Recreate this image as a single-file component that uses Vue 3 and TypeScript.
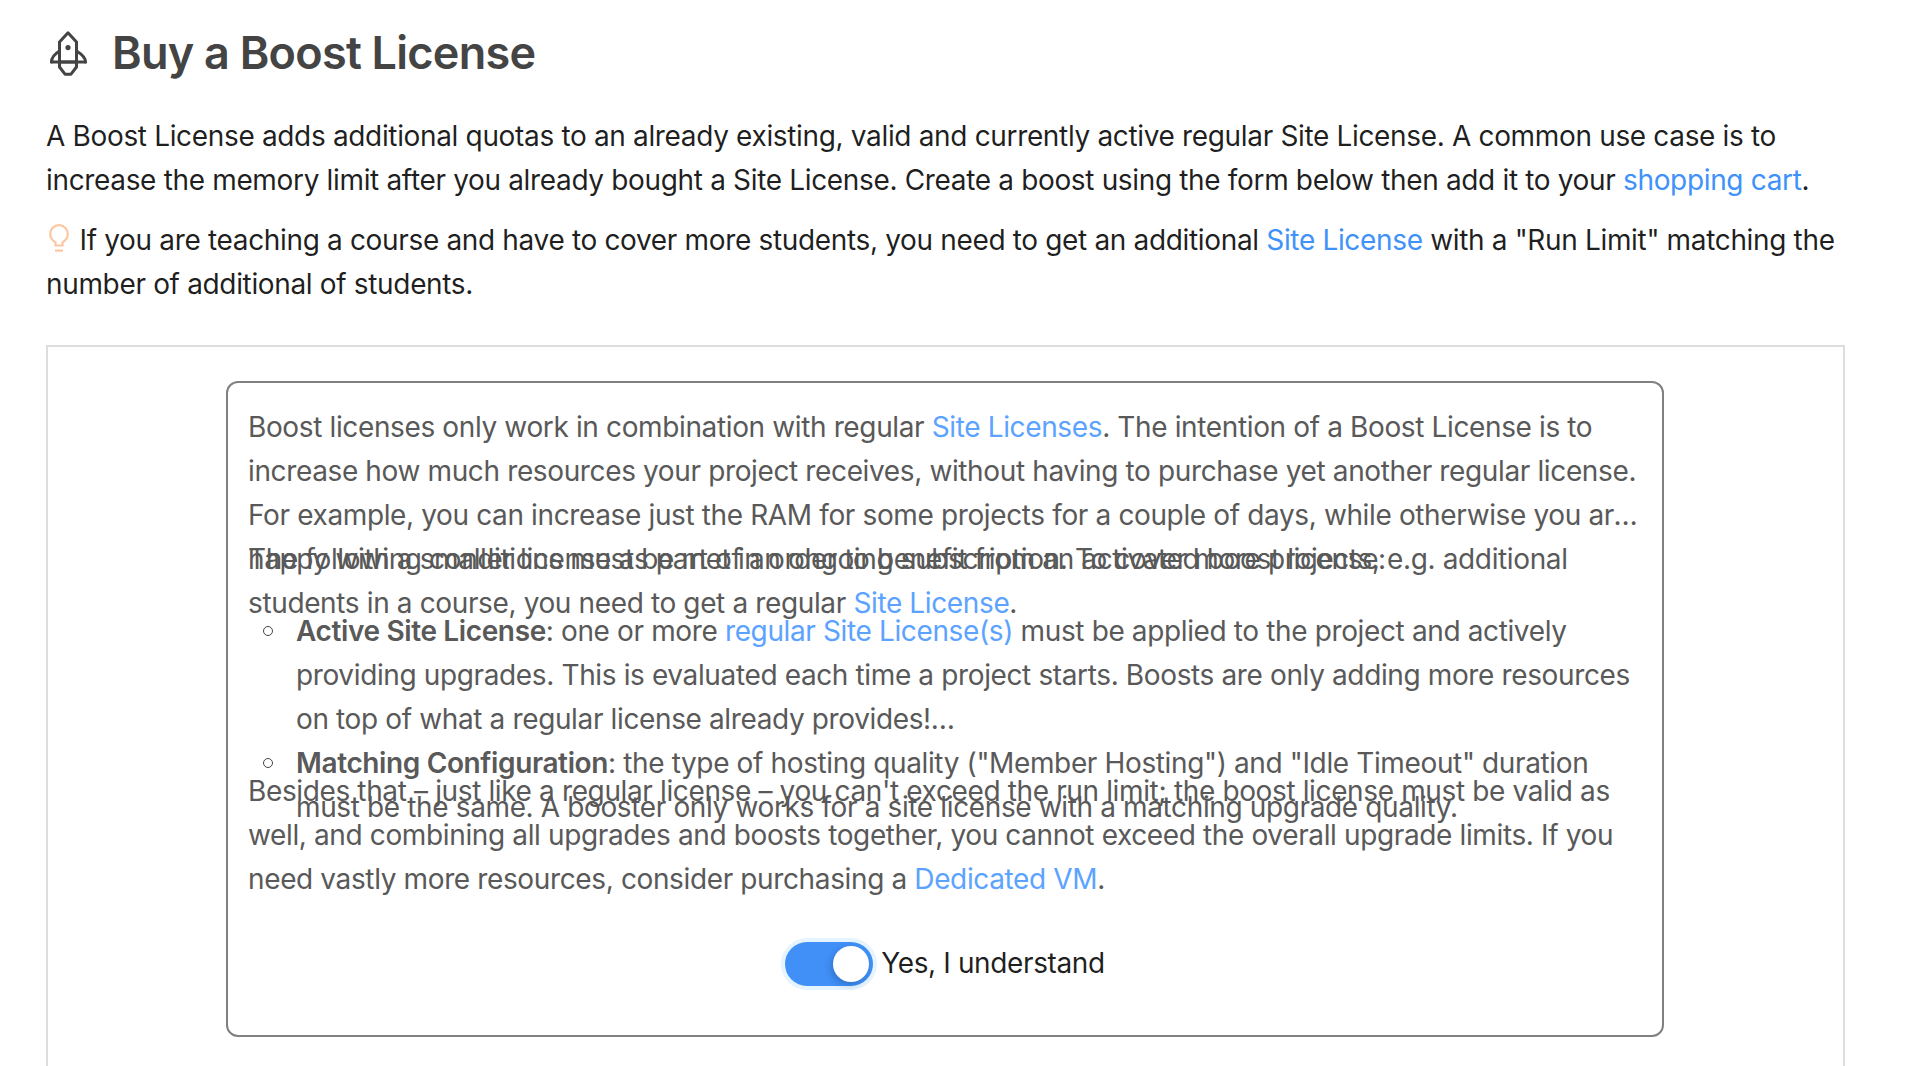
<script setup lang="ts">
import { ref } from "vue";

const understood = ref(true);
</script>

<template>
  <main class="page">
    <h1 class="title">
      <svg class="rocket" viewBox="0 0 37 45" fill="none" stroke="currentColor" stroke-width="3" stroke-linejoin="round" stroke-linecap="round" aria-hidden="true">
        <path d="M18 1.8 L26.5 11 V31 H9.5 V11 Z" />
        <path d="M1.5 31 H35.5" />
        <path d="M9.5 20 C4.5 23 1.5 27 1.5 31 M26.5 20 C31.5 23 35.5 27 35.5 31" />
        <path d="M9.5 31 V36 L15 43.2 H21 L26.5 36 V31" />
        <circle cx="18" cy="16.6" r="2.6" fill="currentColor" stroke="none" />
      </svg>
      <span>Buy a Boost License</span>
    </h1>

    <p class="intro">
      A Boost License adds additional quotas to an already existing, valid and currently active regular Site License. A common use case is to increase the memory limit after you already bought a Site License. Create a boost using the form below then add it to your <a href="#">shopping cart</a>.
    </p>
    <p class="intro">
      <svg class="bulb" viewBox="0 0 20 28" fill="none" stroke="currentColor" stroke-width="2.2" aria-hidden="true">
        <path d="M6.5 21.5 V18.5 C3.5 16.5 1.2 13.5 1.2 10 C1.2 5 5 1.2 10 1.2 C15 1.2 18.8 5 18.8 10 C18.8 13.5 16.5 16.5 13.5 18.5 V21.5 Z" />
        <path d="M6 26.6 H14" />
      </svg>
      If you are teaching a course and have to cover more students, you need to get an additional <a href="#">Site License</a> with a "Run Limit" matching the number of additional of students.
    </p>

    <section class="frame">
      <div class="notice">
        <p class="clamped lead">
          Boost licenses only work in combination with regular <a href="#">Site Licenses</a>. The intention of a Boost License is to increase how much resources your project receives, without having to purchase yet another regular license. For example, you can increase just the RAM for some projects for a couple of days, while otherwise you are happy with a smaller license as part of an ongoing subscription. To cover more projects, e.g. additional students in a course, you need to get a regular <a href="#">Site License</a>.
        </p>
        <p class="plain">The following conditions must be met in order to benefit from an activated boost license:</p>
        <ul class="clamped rules">
          <li><strong>Active Site License</strong>: one or more <a href="#">regular Site License(s)</a> must be applied to the project and actively providing upgrades. This is evaluated each time a project starts. Boosts are only adding more resources on top of what a regular license already provides!</li>
          <li><strong>Matching Configuration</strong>: the type of hosting quality ("Member Hosting") and "Idle Timeout" duration must be the same. A booster only works for a site license with a matching upgrade quality.</li>
        </ul>
        <p class="plain">
          Besides that – just like a regular license – you can't exceed the run limit; the boost license must be valid as well, and combining all upgrades and boosts together, you cannot exceed the overall upgrade limits. If you need vastly more resources, consider purchasing a <a href="#">Dedicated VM</a>.
        </p>
        <div class="confirm">
          <button type="button" class="switch" :class="{ 'is-on': understood }" role="switch" :aria-checked="understood" aria-label="Yes, I understand" @click="understood = !understood">
            <span class="knob"></span>
          </button>
          <span>Yes, I understand</span>
        </div>
      </div>
    </section>
  </main>
</template>

<style>
html,
body {
  margin: 0;
  height: 100%;
  overflow: hidden;
  background: #fff;
}
</style>

<style scoped>
.page {
  padding: 21px 61px 0 46px;
  font-family: Inter, "Liberation Sans", sans-serif;
  font-size: 28px;
  line-height: 44px;
  letter-spacing: -0.34px;
  color: rgba(0, 0, 0, 0.88);
}

a {
  color: #4092fa;
  text-decoration: none;
}

.title {
  display: flex;
  align-items: center;
  gap: 25px;
  margin: 0 0 29px;
  height: 64px;
  font-size: 45px;
  font-weight: 600;
  line-height: 64px;
  letter-spacing: -0.75px;
  color: #444;
}

.rocket {
  width: 37px;
  height: 45px;
  margin-left: 4px;
  flex: none;
}

.intro {
  margin: 0 0 16px;
}

.bulb {
  width: 20px;
  height: 28px;
  margin: 0 3px 0 3px;
  vertical-align: -2px;
  color: #fdc6a2;
}

.frame {
  box-sizing: border-box;
  height: 900px;
  margin-top: 39px;
  padding: 34px 179px 0 178px;
  border: 2px solid #ddd;
  border-bottom: 0;
}

.notice {
  box-sizing: border-box;
  height: 656px;
  padding: 22px 20px 0;
  border: 2px solid #808080;
  border-radius: 12px;
  color: #595959;
  letter-spacing: -0.37px;
}

.notice a {
  color: #5ca3ff;
}

.notice p,
.notice ul {
  margin-top: 0;
}

.clamped {
  display: -webkit-box;
  -webkit-box-orient: vertical;
  -webkit-line-clamp: 3;
  overflow: visible;
}

.lead {
  margin-bottom: 0;
}

.plain {
  margin-bottom: 28px;
}

.rules {
  margin-bottom: 28px;
  padding-left: 48px;
  list-style: none;
}

.rules li {
  position: relative;
}

.rules li::before {
  content: "";
  position: absolute;
  top: 17px;
  left: -33px;
  box-sizing: border-box;
  width: 10px;
  height: 10px;
  border: 1px solid #444;
  border-radius: 50%;
}

.rules strong {
  font-weight: 600;
}

.confirm {
  display: flex;
  align-items: center;
  justify-content: center;
  gap: 8px;
  margin-top: 40px;
  color: rgba(0, 0, 0, 0.88);
}

.switch {
  position: relative;
  top: 1px;
  width: 88px;
  height: 44px;
  padding: 0;
  border: 0;
  border-radius: 22px;
  background: #bfbfbf;
  box-shadow: 0 0 0 4px #e6f4ff;
  cursor: pointer;
}

.switch.is-on {
  background: #4090f7;
}

.knob {
  position: absolute;
  top: 4px;
  left: 4px;
  width: 36px;
  height: 36px;
  border-radius: 50%;
  background: #fff;
  box-shadow: -2px 3px 6px rgba(0, 35, 80, 0.25);
}

.is-on .knob {
  left: 48px;
}
</style>
